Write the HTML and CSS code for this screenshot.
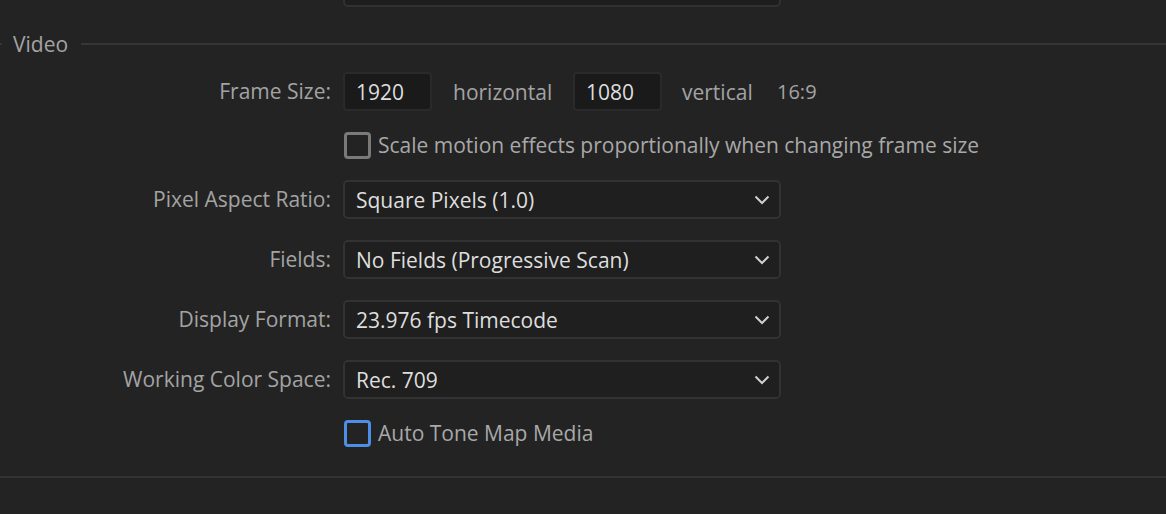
FILE: index.html
```html
<!DOCTYPE html>
<html lang="en">
<head>
<meta charset="utf-8">
<title>Sequence Settings - Video</title>
<link rel="stylesheet" href="styles.css">
</head>
<body>
<div class="panel">
  <div class="top-box"></div>
  <div class="section-head">
    <span class="stub"></span>
    <span class="section-title">Video</span>
    <span class="rule"></span>
  </div>
  <div class="form">
    <div class="label">Frame Size:</div>
    <div class="control frame">
      <div class="num-input">1920</div>
      <span class="unit unit-h">horizontal</span>
      <div class="num-input">1080</div>
      <span class="unit unit-v">vertical</span>
      <span class="ratio">16:9</span>
    </div>

    <div class="label"></div>
    <div class="control">
      <label class="check"><span class="box"></span><span class="check-text">Scale motion effects proportionally when changing frame size</span></label>
    </div>

    <div class="label">Pixel Aspect Ratio:</div>
    <div class="control">
      <div class="select"><span>Square Pixels (1.0)</span><svg class="chev" width="16" height="10" viewBox="0 0 16 10"><path d="M1.5 1.5 L8 8 L14.5 1.5" fill="none" stroke="#cfcfcf" stroke-width="2"/></svg></div>
    </div>

    <div class="label">Fields:</div>
    <div class="control">
      <div class="select"><span>No Fields (Progressive Scan)</span><svg class="chev" width="16" height="10" viewBox="0 0 16 10"><path d="M1.5 1.5 L8 8 L14.5 1.5" fill="none" stroke="#cfcfcf" stroke-width="2"/></svg></div>
    </div>

    <div class="label">Display Format:</div>
    <div class="control">
      <div class="select"><span>23.976 fps Timecode</span><svg class="chev" width="16" height="10" viewBox="0 0 16 10"><path d="M1.5 1.5 L8 8 L14.5 1.5" fill="none" stroke="#cfcfcf" stroke-width="2"/></svg></div>
    </div>

    <div class="label">Working Color Space:</div>
    <div class="control">
      <div class="select"><span>Rec. 709</span><svg class="chev" width="16" height="10" viewBox="0 0 16 10"><path d="M1.5 1.5 L8 8 L14.5 1.5" fill="none" stroke="#cfcfcf" stroke-width="2"/></svg></div>
    </div>

    <div class="label"></div>
    <div class="control">
      <label class="check"><span class="box focus"></span><span class="check-text">Auto Tone Map Media</span></label>
    </div>
  </div>
  <div class="bottom-rule"></div>
</div>
</body>
</html>
```
FILE: styles.css
```css
html, body {
  margin: 0;
  padding: 0;
  background: #232323;
}
body {
  font-family: "Open Sans", Lato, "Liberation Sans", sans-serif;
  font-size: 21px;
  color: #a3a3a3;
  width: 1166px;
  height: 514px;
  overflow: hidden;
}
.panel {
  display: flex;
  flex-direction: column;
}
.top-box {
  margin-left: 343px;
  width: 438px;
  height: 7px;
  box-sizing: border-box;
  background: #1e1e1e;
  border: 2px solid #313131;
  border-top: none;
  border-radius: 0 0 5px 5px;
}
.section-head {
  display: flex;
  align-items: center;
  height: 24px;
  margin-top: 25px;
}
.stub {
  width: 2px;
  height: 2px;
  background: #363636;
}
.section-title {
  padding: 0 13px 0 11px;
  color: #a3a3a3;
  line-height: 24px;
}
.rule {
  flex: 1;
  height: 2px;
  background: #363636;
}
.form {
  display: grid;
  grid-template-columns: 331px 438px;
  column-gap: 12px;
  row-gap: 21px;
  align-items: center;
  margin-top: 16px;
}
.label {
  text-align: right;
  white-space: nowrap;
  line-height: 27px;
}
.control {
  display: flex;
  align-items: center;
}
.frame .num-input {
  width: 89px;
  height: 39px;
  box-sizing: border-box;
  flex: none;
  background: #1a1a1a;
  border: 2px solid #2a2a2a;
  border-radius: 4px;
  color: #dedede;
  padding-left: 11px;
  line-height: 37px;
}
.unit {
  flex: none;
  box-sizing: border-box;
  white-space: nowrap;
}
.unit-h {
  width: 141px;
  padding-left: 21px;
}
.unit-v {
  width: 116px;
  padding-left: 20px;
}
.ratio {
  font-size: 20px;
  margin-left: -1px;
}
.check {
  display: flex;
  align-items: center;
  gap: 7px;
  margin-left: 1px;
  line-height: 27px;
}
.box {
  width: 27px;
  height: 27px;
  flex: none;
  box-sizing: border-box;
  border: 3px solid #7a7a7a;
  border-radius: 4px;
}
.box.focus {
  border-color: #4b8fe6;
}
.check-text {
  color: #a8a8a8;
  white-space: nowrap;
}
.select {
  width: 438px;
  height: 39px;
  box-sizing: border-box;
  display: flex;
  align-items: center;
  justify-content: space-between;
  background: #1f1f1f;
  border: 2px solid #323232;
  border-radius: 5px;
  padding: 0 9px 0 11px;
  color: #dedede;
}
.chev {
  display: block;
}
.bottom-rule {
  height: 2px;
  background: #333333;
  margin-top: 29px;
}
```
